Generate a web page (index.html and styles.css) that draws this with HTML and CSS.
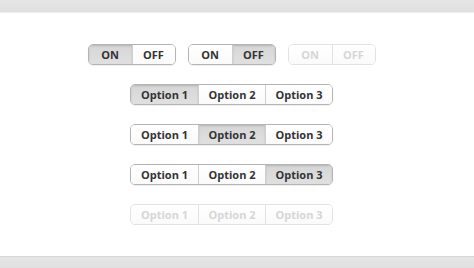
FILE: index.html
```html
<!DOCTYPE html>
<html lang="en">
<head>
  <meta charset="UTF-8" />
  <title>Segmented buttons</title>
  <link rel="stylesheet" href="styles.css">
</head>
<body>

  <div class="bar"></div>

  <main class="demo">
    <div class="row">
      <div class="seg toggle">
        <button class="active">ON</button>
        <button>OFF</button>
      </div>
      <div class="seg toggle">
        <button>ON</button>
        <button class="active">OFF</button>
      </div>
      <div class="seg toggle disabled">
        <button>ON</button>
        <button>OFF</button>
      </div>
    </div>

    <div class="seg options">
      <button class="active">Option 1</button>
      <button>Option 2</button>
      <button>Option 3</button>
    </div>

    <div class="seg options">
      <button>Option 1</button>
      <button class="active">Option 2</button>
      <button>Option 3</button>
    </div>

    <div class="seg options">
      <button>Option 1</button>
      <button>Option 2</button>
      <button class="active">Option 3</button>
    </div>

    <div class="seg options disabled">
      <button>Option 1</button>
      <button>Option 2</button>
      <button>Option 3</button>
    </div>
  </main>

  <div class="bar bottom"></div>

</body>
</html>
```

FILE: styles.css
```css
:root {
  --border: #b4b4b4;
  --divider: #cfcfcf;
  --text: #333;
  --active: #dcdcdc;
  --faded: #e2e2e2;
}

body {
  margin: 0;
  height: 268px;
  background: #fff;
  font-family: 'Open Sans', 'DejaVu Sans', sans-serif;
  display: flex;
  flex-direction: column;
  overflow: hidden;
}

.bar {
  height: 12px;
  background: linear-gradient(#e6e6e6, #e0e0e0);
  box-shadow: 0 1px 1px rgba(0, 0, 0, 0.06);
}

.bar.bottom {
  margin-top: auto;
  border-top: 1px solid #d6d6d6;
  height: 11px;
}

.demo {
  display: flex;
  flex-direction: column;
  align-items: center;
  gap: 19px;
  padding: 32px 11px 0 0;
}

.row {
  display: flex;
  gap: 12px;
}

.seg {
  display: flex;
  border: 1px solid var(--border);
  border-radius: 5px;
  overflow: hidden;
  box-shadow: 0 1px 1px rgba(0, 0, 0, 0.08);
}

.seg button {
  height: 19px;
  padding: 0;
  border: none;
  border-left: 1px solid var(--divider);
  background: linear-gradient(#fff, #fafafa);
  color: var(--text);
  font-family: inherit;
  font-size: 11px;
  font-weight: 700;
  cursor: pointer;
}

.seg button:first-child {
  border-left: none;
}

.seg button.active {
  background: linear-gradient(#d6d6d6, #e0e0e0);
  box-shadow: inset 0 1px 2px rgba(0, 0, 0, 0.15);
}

.toggle button {
  width: 43px;
}

.options button {
  width: 67px;
}

.seg.disabled {
  border-color: var(--faded);
  box-shadow: none;
}

.seg.disabled button {
  color: #d6d6d6;
  border-left-color: var(--faded);
  cursor: default;
}
```
